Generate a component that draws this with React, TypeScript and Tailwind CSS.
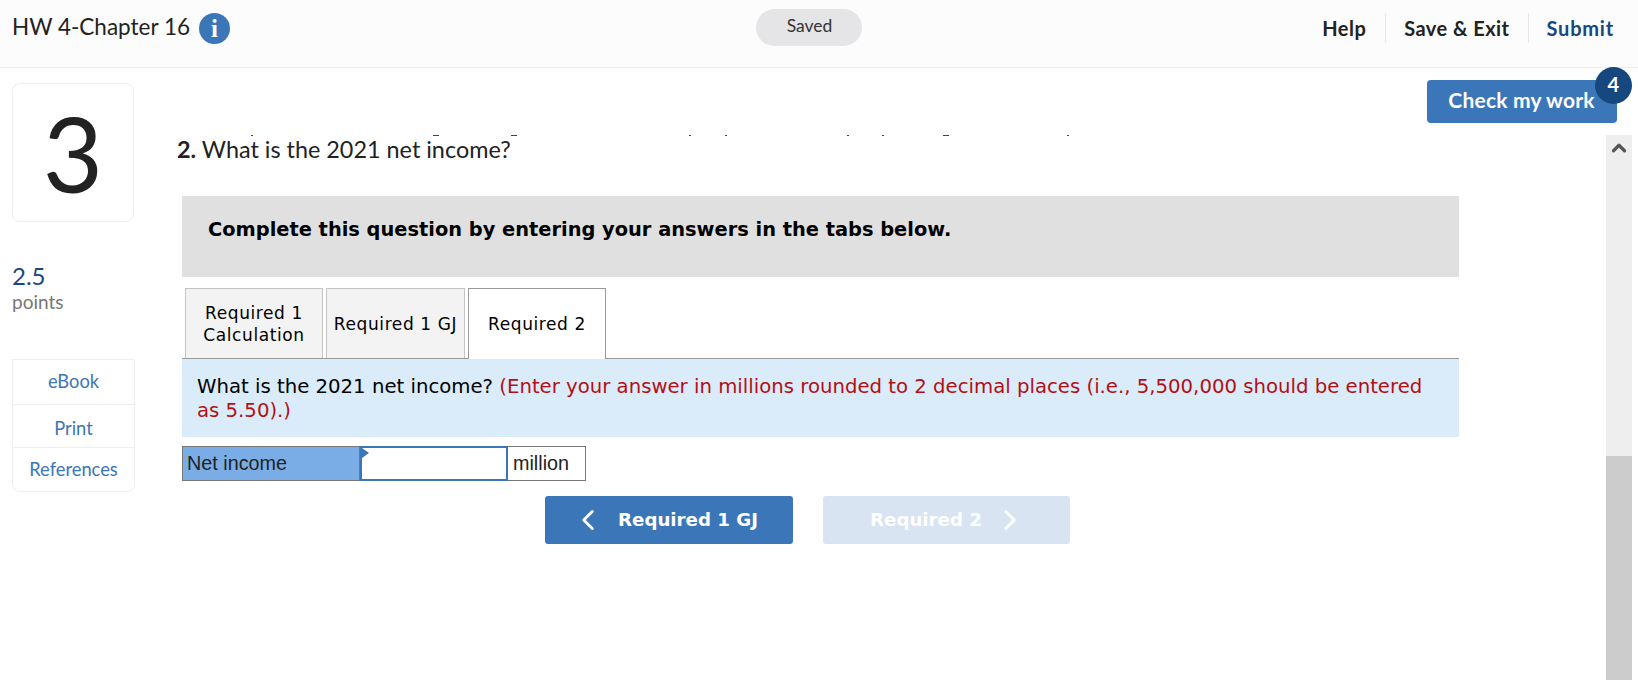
import { ChevronLeft, ChevronRight, ChevronUp } from "lucide-react";

const proxima = "font-['Lato','Noto_Sans',sans-serif]";
const verdana = "font-['DejaVu_Sans','Liberation_Sans',sans-serif]";
const arial = "font-['Liberation_Sans',Arial,sans-serif]";

// bottoms of the line above that the scroll pane cuts off
const clippedMarks = [
    [251, 2], [433, 6], [511, 6], [689, 2], [725, 2], [847, 2], [882, 2], [943, 6], [1067, 2],
];

function Header() {
    return (
        <header className="flex h-[68px] shrink-0 border-b border-[#eeeeee] bg-[#fcfcfc]">
            <div className="flex w-[756px] items-start pl-3 pt-[11px]">
                <h1 className={`${proxima} text-[22.5px] leading-[32px] text-[#222222]`}>HW 4-Chapter 16</h1>
                <span className="ml-[9px] mt-[2px] flex h-[31px] w-[31px] items-center justify-center rounded-full bg-[#3b76b8] font-['Liberation_Serif',serif] text-[25px] font-bold leading-none text-white">
                    i
                </span>
            </div>
            <div className="mt-[9px] flex h-[37px] w-[106px] items-center justify-center rounded-full bg-[#e5e5e8] pb-[3px] pl-[1px]">
                <span className={`${proxima} text-[17.5px] text-[#333333]`}>Saved</span>
            </div>
            <nav className={`${proxima} flex flex-1 items-start justify-end pr-[24px] pt-[13px] text-[20px] font-bold leading-[30px] tracking-[0.45px]`}>
                <a className="pr-[19px] text-[#222222]">Help</a>
                <a className="border-l border-[#e8e8e8] px-[18px] text-[#222222]">Save &amp; Exit</a>
                <a className="border-l border-[#e8e8e8] pl-[18px] tracking-[0.8px] text-[#16477f]">Submit</a>
            </nav>
        </header>
    );
}

function Sidebar() {
    return (
        <aside className="w-[177px] shrink-0 pl-3 pt-[15px]">
            <div className="flex h-[139px] w-[122px] items-center justify-center rounded-lg border border-[#eeeeee]">
                <span className={`${proxima} text-[104px] leading-none text-[#222222]`}>3</span>
            </div>
            <div className={`${proxima} mt-[40px] text-[24px] leading-[27px] text-[#16477f]`}>2.5</div>
            <div className={`${proxima} text-[19px] leading-[26px] text-[#777777]`}>points</div>
            <div className={`${proxima} mt-[44px] w-[123px] rounded-b-lg border border-[#eeeeee] text-center text-[18.3px] text-[#3b76b8]`}>
                <div className="flex h-[45px] items-center justify-center border-b border-[#eeeeee]">eBook</div>
                <div className="flex h-[43px] items-center justify-center border-b border-[#eeeeee] pt-[5px]">Print</div>
                <div className="flex h-[43px] items-center justify-center">References</div>
            </div>
        </aside>
    );
}

function Tab({ active, children, className }: any) {
    return (
        <div
            className={`flex items-center justify-center border border-b-0 text-center text-[17px] leading-[22px] tracking-[0.6px] ${
                active ? "relative z-10 -mb-px h-[71px] border-[#999999] bg-white" : "h-[70px] border-[#c4c4c4] bg-[#f3f3f3]"
            } ${className}`}
        >
            {children}
        </div>
    );
}

function QuestionPane() {
    return (
        <div className="relative min-w-0 flex-1 overflow-hidden">
            <svg className="absolute left-0 top-0 h-[2px] w-full" aria-hidden="true">
                {clippedMarks.map(([x, w]) => (
                    <rect key={x} x={x - 177} y={0} width={w} height={1} fill="#444444" />
                ))}
            </svg>
            <p className={`${proxima} -mt-px text-[23.4px] leading-[30px] text-[#222222]`}>
                <b>2.</b> What is the 2021 net income?
            </p>
            <div className={`${verdana} ml-[5px] mt-[32px] w-[1277px] text-black`}>
                <div className="h-[81px] bg-[#e0e0e0] pl-[26px] pt-[20px] text-[19.4px] font-bold leading-[28px]">
                    Complete this question by entering your answers in the tabs below.
                </div>
                <div className="flex gap-[3px] pl-[3px] pt-[11px]">
                    <Tab className="w-[138px]">Required 1<br />Calculation</Tab>
                    <Tab className="w-[139px]">Required 1 GJ</Tab>
                    <Tab active className="w-[138px]">Required 2</Tab>
                </div>
                <div className="h-[79px] border-t border-[#999999] bg-[#daecfa] pl-[15px] pr-[30px] pt-[16px] text-[19.7px] leading-[24px]">
                    What is the 2021 net income?{" "}
                    <span className="text-[#b30f14]">
                        (Enter your answer in millions rounded to 2 decimal places (i.e., 5,500,000 should be entered as 5.50).)
                    </span>
                </div>
                <div className={`${arial} mt-[9px] flex h-[35px] text-[19.8px] leading-[32px] text-[#222222]`}>
                    <div className="w-[178px] border border-[#777777] bg-[#7aade6] pl-[4px]">Net income</div>
                    <div className="relative w-[148px] border-2 border-[#3b76b8] bg-white">
                        <span className="absolute left-0 top-0 h-0 w-0 border-y-[5px] border-l-[7px] border-y-transparent border-l-[#3b76b8]" />
                    </div>
                    <div className="w-[78px] border border-[#777777] border-l-0 pl-[5px]">million</div>
                </div>
                <div className="mt-[15px] flex gap-[30px] pl-[363px] text-[18.2px] font-bold text-white">
                    <button className="flex h-[48px] w-[248px] items-center justify-center gap-[13px] rounded-[3px] bg-[#3b76b8] pr-[9px]">
                        <ChevronLeft size={34} strokeWidth={2} />
                        Required 1 GJ
                    </button>
                    <button className="flex h-[48px] w-[247px] items-center justify-center gap-[11px] rounded-[3px] bg-[#d8e4f1] pl-[4px]">
                        Required 2
                        <ChevronRight size={34} strokeWidth={2} />
                    </button>
                </div>
            </div>
        </div>
    );
}

function Scrollbar() {
    return (
        <div className="mr-[6px] flex w-[26px] shrink-0 flex-col bg-[#eeeeee]">
            <div className="flex h-[321px] justify-center pt-[2px] text-[#555555]">
                <ChevronUp size={22} strokeWidth={3.5} />
            </div>
            <div className="flex-1 bg-[#cccccc]" />
        </div>
    );
}

export default function App() {
    return (
        <div className="flex h-[680px] w-[1638px] flex-col overflow-hidden bg-white">
            <Header />
            <div className="flex min-h-0 flex-1">
                <Sidebar />
                <main className="flex min-w-0 flex-1 flex-col">
                    <div className="flex h-[67px] shrink-0 justify-end pr-[21px] pt-[12px]">
                        <button className={`${proxima} relative h-[43px] w-[190px] rounded-[4px] bg-[#3b76b8] pb-[3px] pr-[1px] text-[21px] font-bold tracking-[0.2px] text-white`}>
                            Check my work
                            <span className="absolute -right-[15px] -top-[13px] flex h-[37px] w-[37px] items-center justify-center rounded-full bg-[#16477f] pb-[3px] text-[20px]">
                                4
                            </span>
                        </button>
                    </div>
                    <div className="flex min-h-0 flex-1">
                        <QuestionPane />
                        <Scrollbar />
                    </div>
                </main>
            </div>
        </div>
    );
}
